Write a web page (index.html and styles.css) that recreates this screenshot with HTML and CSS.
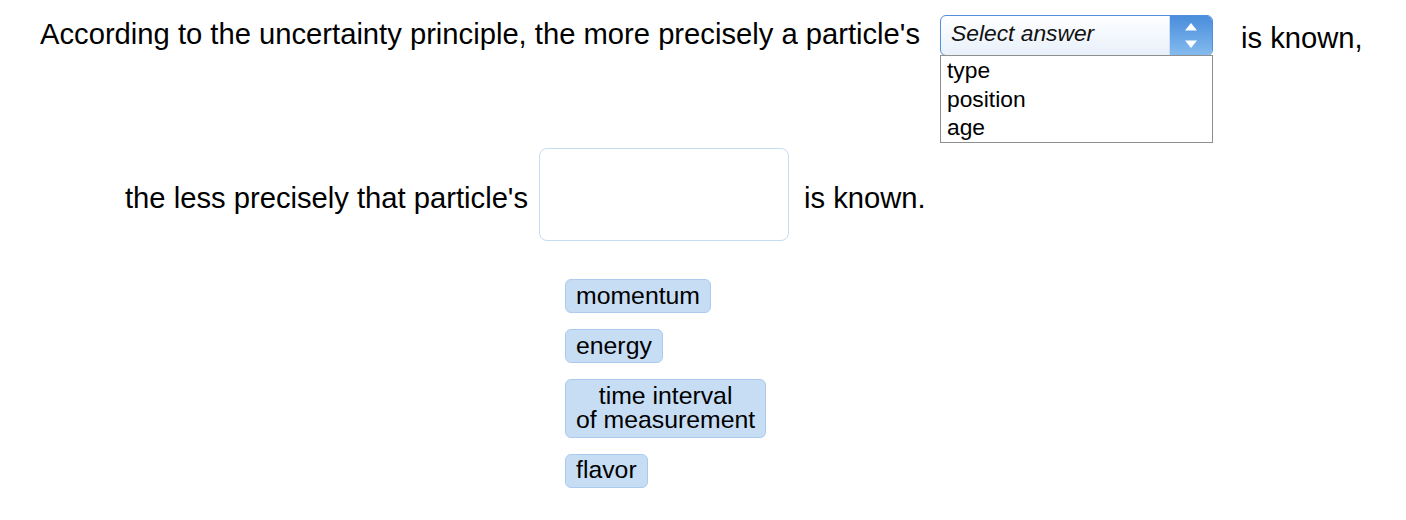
FILE: index.html
```html
<!DOCTYPE html>
<html lang="en">
<head>
<meta charset="utf-8">
<title>Uncertainty principle</title>
<link rel="stylesheet" href="styles.css">
</head>
<body>
<main class="question">
  <div class="row row-first">
    <span class="phrase phrase-lead">According to the uncertainty principle, the more precisely a particle's</span>
    <div class="picker">
      <div class="picker-box">
        <span class="picker-label">Select answer</span>
        <span class="picker-arrows">
          <svg width="14" height="26" viewBox="0 0 14 26" aria-hidden="true">
            <path d="M7 0 L13 7.5 L1 7.5 Z" fill="#fff"/>
            <path d="M1 17.5 L13 17.5 L7 25 Z" fill="#fff"/>
          </svg>
        </span>
      </div>
      <ul class="picker-list">
        <li>type</li>
        <li>position</li>
        <li>age</li>
      </ul>
    </div>
    <span class="phrase phrase-tail">is known,</span>
  </div>

  <div class="row row-second">
    <span class="phrase phrase-mid">the less precisely that particle's</span>
    <div class="drop-slot"></div>
    <span class="phrase phrase-end">is known.</span>
  </div>

  <div class="bank">
    <div class="chip">momentum</div>
    <div class="chip">energy</div>
    <div class="chip">time interval<br>of measurement</div>
    <div class="chip">flavor</div>
  </div>
</main>
</body>
</html>
```

FILE: styles.css
```css
html, body {
  margin: 0;
  padding: 0;
  background: #ffffff;
}

body {
  font-family: "Liberation Sans", Arial, sans-serif;
  color: #000;
}

.question {
  padding-top: 15px;
}

.row {
  display: flex;
  align-items: flex-start;
}

.phrase {
  font-size: 29.2px;
  line-height: 34px;
  white-space: nowrap;
}

/* first sentence line */
.row-first {
  padding-left: 40px;
}

.phrase-lead {
  margin-top: 2px;
}

.phrase-tail {
  margin-top: 6px;
  margin-left: 28px;
}

/* dropdown */
.picker {
  position: relative;
  margin-left: 20px;
  width: 273px;
}

.picker-box {
  display: flex;
  height: 39px;
  border: 1px solid #4f8fdc;
  border-radius: 6px;
  background: linear-gradient(#ffffff, #e8f0fa);
  overflow: hidden;
}

.picker-label {
  flex: 1;
  padding-left: 10px;
  padding-bottom: 5px;
  font-size: 22.8px;
  line-height: 34px;
  font-style: italic;
  color: #111;
}

.picker-arrows {
  width: 42px;
  display: flex;
  align-items: center;
  justify-content: center;
  background: linear-gradient(#4a8ddb, #84bbef);
  border-left: 1px solid #cfe0f3;
}

.picker-list {
  position: absolute;
  left: 0;
  right: 0;
  top: 40px;
  margin: 0;
  padding: 0 0 0 6px;
  list-style: none;
  background: #fff;
  border: 1px solid #8f8f8f;
  font-size: 22.8px;
  line-height: 28.5px;
}

/* second sentence line */
.row-second {
  margin-top: 92px;
  padding-left: 125px;
}

.phrase-mid {
  margin-top: 33px;
}

.drop-slot {
  width: 248px;
  height: 91px;
  margin-left: 11px;
  border: 1px solid #c6dcf2;
  border-radius: 8px;
  background: #fff;
}

.phrase-end {
  margin-top: 33px;
  margin-left: 15px;
}

/* answer bank */
.bank {
  display: flex;
  flex-direction: column;
  align-items: flex-start;
  gap: 16px;
  margin-top: 38px;
  padding-left: 565px;
}

.chip {
  padding: 3.75px 10px 3.75px 10px;
  font-size: 24.8px;
  line-height: 24.5px;
  text-align: center;
  background: #c7ddf4;
  border: 1px solid #abcbee;
  border-radius: 6px;
}
```
